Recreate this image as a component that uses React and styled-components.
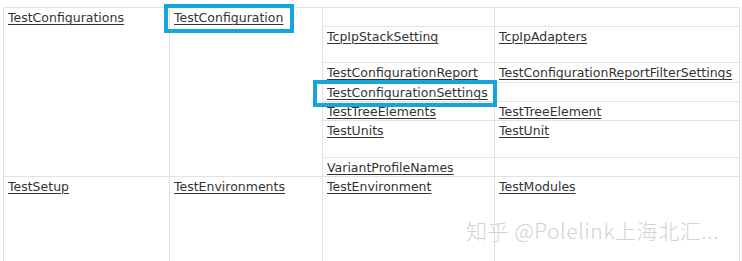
import React from "react";
import styled, { createGlobalStyle } from "styled-components";

const Global = createGlobalStyle`
  html, body { margin: 0; padding: 0; background: #fff; }
`;

const Page = styled.div`
  position: relative;
  width: 742px;
  height: 261px;
  overflow: hidden;
  background: #fff;
  padding: 7px 0 0 3px;
  box-sizing: border-box;
  font-family: "DejaVu Sans", Verdana, sans-serif;
  font-size: 12.5px;
  color: #333;
`;

const Table = styled.div`
  display: grid;
  grid-template-columns: 166px 153px 417px;
  width: 737px;
  border-top: 1px solid #e2e2e2;
  border-left: 1px solid #e2e2e2;
  box-sizing: border-box;
`;

const Cell = styled.div`
  box-sizing: border-box;
  border-right: 1px solid #e2e2e2;
  border-bottom: 1px solid #e2e2e2;
  padding: 2px 0 0 4px;
  line-height: 16px;
  height: ${(p) => p.$h}px;
`;

const Nested = styled.div`
  display: grid;
  grid-template-columns: 172px 245px;
  grid-auto-rows: auto;
`;

const NCell = styled(Cell)`
  white-space: nowrap;
`;

const Link = styled.a`
  color: #333;
  text-decoration: underline;
  text-underline-offset: 2px;
  text-decoration-thickness: 1px;
`;

const Highlight = styled.div`
  position: absolute;
  box-sizing: border-box;
  border: 4px solid #16a4dc;
  left: ${(p) => p.$x}px;
  top: ${(p) => p.$y}px;
  width: ${(p) => p.$w}px;
  height: ${(p) => p.$hh}px;
`;

const Watermark = styled.div`
  position: absolute;
  left: 466px;
  top: 218px;
  font-family: "Noto Sans CJK SC", "Noto Sans", sans-serif;
  font-size: 21px;
  font-weight: 300;
  line-height: 24px;
  color: #d2d2d2;
  white-space: nowrap;
  letter-spacing: 0.6px;
`;

const nestedRows = [
  { h: 19, a: "", b: "" },
  { h: 36, a: "TcpIpStackSetting", b: "TcpIpAdapters" },
  { h: 20, a: "TestConfigurationReport", b: "TestConfigurationReportFilterSettings" },
  { h: 19, a: "TestConfigurationSettings", b: "" },
  { h: 19, a: "TestTreeElements", b: "TestTreeElement" },
  { h: 37, a: "TestUnits", b: "TestUnit" },
  { h: 19, a: "VariantProfileNames", b: "" },
];

const L = ({ t }) => (t ? <Link href="#">{t}</Link> : null);

export default function App() {
  return (
    <>
      <Global />
      <Page>
        <Table>
          <Cell $h={169}>
            <L t="TestConfigurations" />
          </Cell>
          <Cell $h={169}>
            <L t="TestConfiguration" />
          </Cell>
          <Nested>
            {nestedRows.map((r, i) => (
              <React.Fragment key={i}>
                <NCell $h={r.h}>
                  <L t={r.a} />
                </NCell>
                <NCell $h={r.h}>
                  <L t={r.b} />
                </NCell>
              </React.Fragment>
            ))}
          </Nested>
          <Cell $h={100}>
            <L t="TestSetup" />
          </Cell>
          <Cell $h={100}>
            <L t="TestEnvironments" />
          </Cell>
          <Nested>
            <NCell $h={100}>
              <L t="TestEnvironment" />
            </NCell>
            <NCell $h={100}>
              <L t="TestModules" />
            </NCell>
          </Nested>
        </Table>
        <Highlight $x={164} $y={4} $w={130} $hh={29} />
        <Highlight $x={313} $y={80} $w={184} $hh={27} />
        <Watermark>知乎 @Polelink上海北汇...</Watermark>
      </Page>
    </>
  );
}
